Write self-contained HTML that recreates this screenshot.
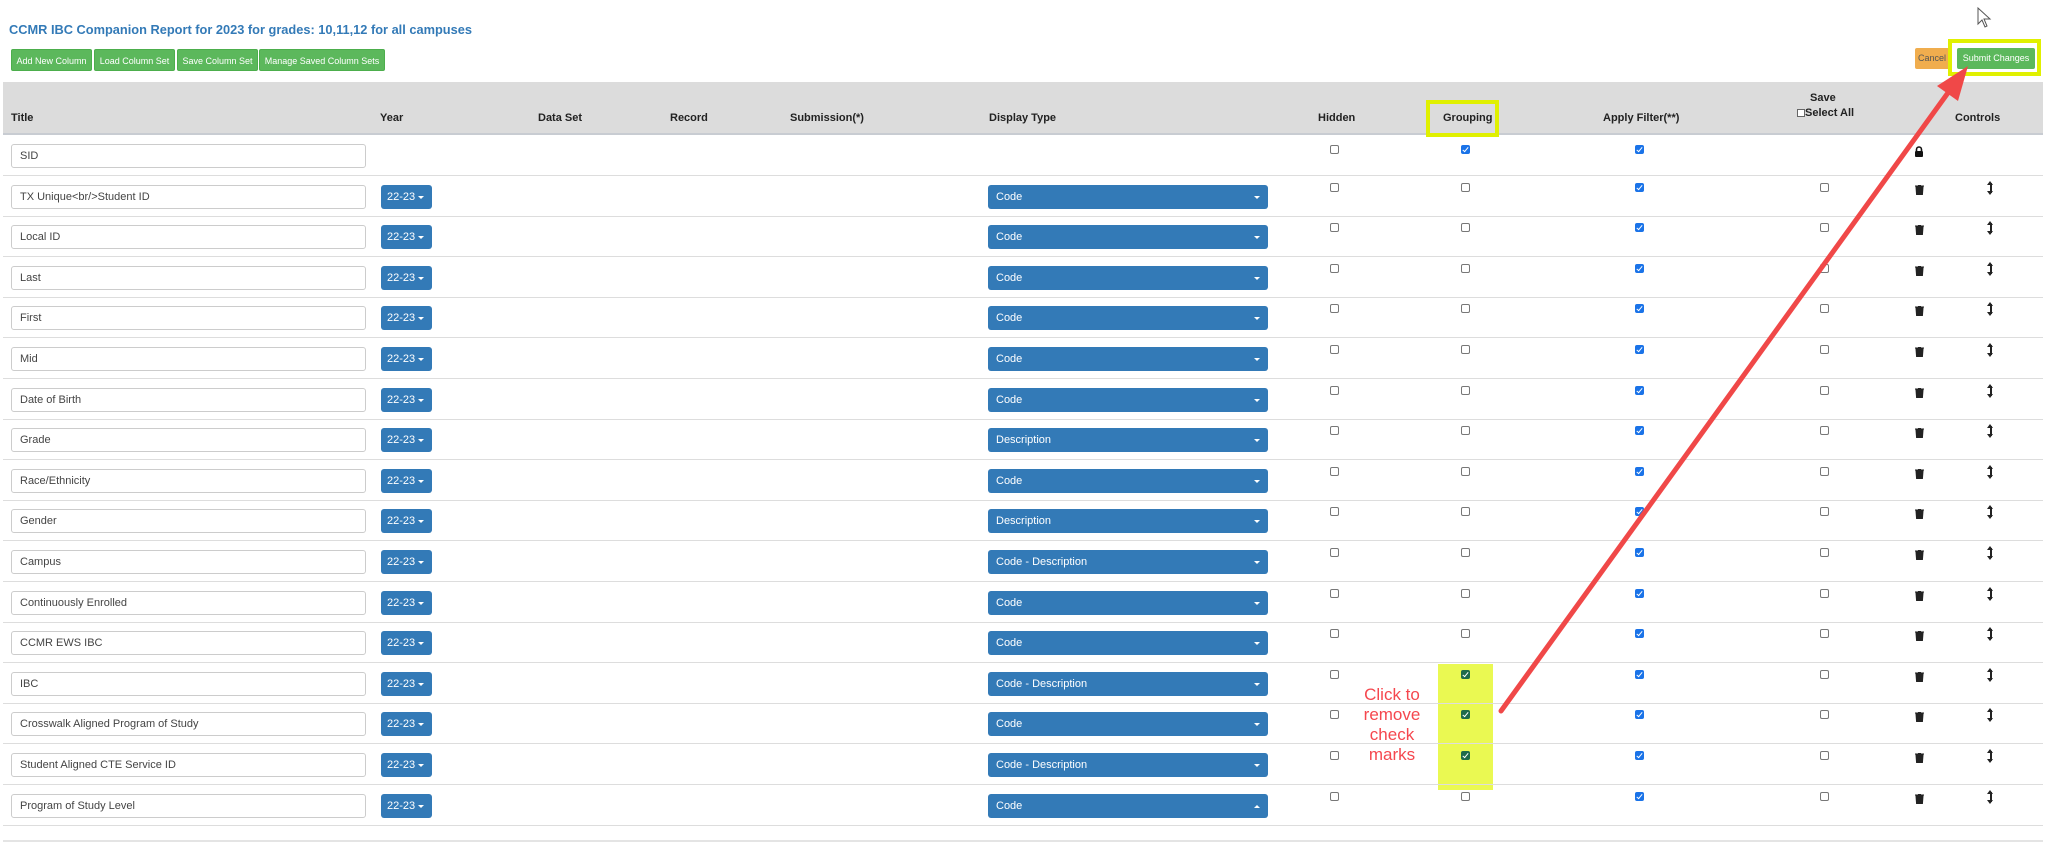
<!DOCTYPE html>
<html><head><meta charset="utf-8"><style>
*{box-sizing:border-box;margin:0;padding:0}
body{width:2048px;height:845px;position:relative;background:#fff;font-family:"Liberation Sans",Arial,sans-serif;overflow:hidden;color:#333}
.a{position:absolute}
.btn{position:absolute;top:49px;height:22px;background:#5cb85c;color:#fff;font-size:9px;line-height:22px;text-align:center;border-radius:2px;border:1px solid #4cae4c;white-space:nowrap;overflow:hidden}
.hd{position:absolute;top:112px;font-size:11px;font-weight:bold;color:#222}
.row{position:absolute;left:3px;width:2040px;height:41px;border-bottom:1px solid #ddd}
.in{position:absolute;left:8px;top:9px;width:355px;height:24px;border:1px solid #ccc;border-radius:3px;font-size:11px;line-height:22px;padding-left:8px;color:#444}
.yr{position:absolute;left:378px;top:9px;width:51px;height:24px;background:#337ab7;border-radius:3px;color:#fff;font-size:11px;line-height:24px;padding-left:6px}
.dt{position:absolute;left:985px;top:9px;width:280px;height:24px;background:#337ab7;border-radius:3px;color:#fff;font-size:11px;line-height:24px;padding-left:8px}
.car{display:inline-block;width:0;height:0;border-left:3px solid transparent;border-right:3px solid transparent;border-top:3px solid #fff;vertical-align:middle;margin-left:3px}
.dt .car{position:absolute;right:8px;top:11px}
.cb{position:absolute;top:7px;width:9px;height:9px;border:1px solid #777;border-radius:2px;background:#fff}
.ck{position:absolute;top:7px;width:9px;height:9px;border-radius:2px;background:#1a73e8}
.ck:after{content:"";position:absolute;left:3px;top:1px;width:2px;height:5px;border:solid #fff;border-width:0 1.5px 1.5px 0;transform:rotate(40deg)}
.g{background:#1f6b4a}
.tr{position:absolute;left:1912px;top:9px;width:9px;height:10px}
.ud{position:absolute;left:1984px;top:5px;width:7px;height:14px;background:no-repeat}
.ud:before{content:"";position:absolute;left:2.5px;top:2px;width:2px;height:10px;background:#222}
.ud:after{content:"";position:absolute;left:0;top:0;width:0;height:0;border-left:3.5px solid transparent;border-right:3.5px solid transparent;border-bottom:4px solid #222;box-shadow:none}
.ud i{position:absolute;left:0;bottom:0;width:0;height:0;border-left:3.5px solid transparent;border-right:3.5px solid transparent;border-top:4px solid #222}
</style></head><body>
<div class="a" style="left:9px;top:22px;font-size:12.8px;font-weight:bold;color:#337ab7">CCMR IBC Companion Report for 2023 for grades: 10,11,12 for all campuses</div>
<div class="btn" style="left:11px;width:81px">Add New Column</div>
<div class="btn" style="left:94px;width:81px">Load Column Set</div>
<div class="btn" style="left:177px;width:81px">Save Column Set</div>
<div class="btn" style="left:259px;width:126px">Manage Saved Column Sets</div>
<div class="a" style="left:1915px;top:48px;width:36px;height:21px;background:#f0ad4e;border-radius:2px;color:#555;font-size:9px;line-height:21px;padding-left:3px">Cancel</div>
<div class="a" style="left:1957px;top:48px;width:78px;height:21px;background:#5cb85c;border-radius:2px;color:#fff;font-size:9px;line-height:21px;text-align:center">Submit Changes</div>
<div class="a" style="left:1948px;top:39px;width:93px;height:37px;border:4px solid #e0f000"></div>
<div class="a" style="left:3px;top:82px;width:2040px;height:53px;background:#dcdcdc;border-bottom:2px solid #c8ccd2"></div>
<div class="hd" style="left:11px">Title</div>
<div class="hd" style="left:380px">Year</div>
<div class="hd" style="left:538px">Data Set</div>
<div class="hd" style="left:670px">Record</div>
<div class="hd" style="left:790px">Submission(*)</div>
<div class="hd" style="left:989px">Display Type</div>
<div class="hd" style="left:1318px">Hidden</div>
<div class="hd" style="left:1443px">Grouping</div>
<div class="hd" style="left:1603px">Apply Filter(**)</div>
<div class="hd" style="left:1810px;top:92px">Save</div>
<div class="hd" style="left:1797px;top:107px"><span style="display:inline-block;width:8px;height:8px;border:1px solid #666;background:#fff;vertical-align:-1px"></span>Select All</div>
<div class="hd" style="left:1955px">Controls</div>
<div class="a" style="left:1426px;top:100px;width:73px;height:37px;border:4px solid #e0f000"></div>
<div class="a" style="left:1438px;top:664px;width:55px;height:126px;background:#eaf952"></div>

<div class="row" style="top:135px"><div class="in">SID</div><div class="cb" style="left:1327px;top:10px"></div><div class="ck" style="left:1458px;top:10px"></div><div class="ck" style="left:1632px;top:10px"></div>
<svg class="a" style="left:1911px;top:11px" width="10" height="11" viewBox="0 0 10 11"><path d="M2.5 5V3.5a2.5 2.5 0 0 1 5 0V5" fill="none" stroke="#111" stroke-width="1.6"/><rect x="1" y="5" width="8" height="6" rx="1" fill="#111"/></svg></div>

<div class="row" style="top:176px"><div class="in">TX Unique&lt;br/&gt;Student ID</div><div class="yr">22-23<span class="car"></span></div><div class="dt">Code<span class="car"></span></div><div class="cb" style="left:1327px"></div><div class="cb" style="left:1458px"></div><div class="ck" style="left:1632px"></div><div class="cb" style="left:1817px"></div><svg class="tr" viewBox="0 0 9 10"><path d="M0 1h9M3 0h3M1 2h7l-.6 8H1.6z" stroke="#222" fill="#222" stroke-width="1"/></svg><div class="ud"><i></i></div></div>
<div class="row" style="top:216px"><div class="in">Local ID</div><div class="yr">22-23<span class="car"></span></div><div class="dt">Code<span class="car"></span></div><div class="cb" style="left:1327px"></div><div class="cb" style="left:1458px"></div><div class="ck" style="left:1632px"></div><div class="cb" style="left:1817px"></div><svg class="tr" viewBox="0 0 9 10"><path d="M0 1h9M3 0h3M1 2h7l-.6 8H1.6z" stroke="#222" fill="#222" stroke-width="1"/></svg><div class="ud"><i></i></div></div>
<div class="row" style="top:257px"><div class="in">Last</div><div class="yr">22-23<span class="car"></span></div><div class="dt">Code<span class="car"></span></div><div class="cb" style="left:1327px"></div><div class="cb" style="left:1458px"></div><div class="ck" style="left:1632px"></div><div class="cb" style="left:1817px"></div><svg class="tr" viewBox="0 0 9 10"><path d="M0 1h9M3 0h3M1 2h7l-.6 8H1.6z" stroke="#222" fill="#222" stroke-width="1"/></svg><div class="ud"><i></i></div></div>
<div class="row" style="top:297px"><div class="in">First</div><div class="yr">22-23<span class="car"></span></div><div class="dt">Code<span class="car"></span></div><div class="cb" style="left:1327px"></div><div class="cb" style="left:1458px"></div><div class="ck" style="left:1632px"></div><div class="cb" style="left:1817px"></div><svg class="tr" viewBox="0 0 9 10"><path d="M0 1h9M3 0h3M1 2h7l-.6 8H1.6z" stroke="#222" fill="#222" stroke-width="1"/></svg><div class="ud"><i></i></div></div>
<div class="row" style="top:338px"><div class="in">Mid</div><div class="yr">22-23<span class="car"></span></div><div class="dt">Code<span class="car"></span></div><div class="cb" style="left:1327px"></div><div class="cb" style="left:1458px"></div><div class="ck" style="left:1632px"></div><div class="cb" style="left:1817px"></div><svg class="tr" viewBox="0 0 9 10"><path d="M0 1h9M3 0h3M1 2h7l-.6 8H1.6z" stroke="#222" fill="#222" stroke-width="1"/></svg><div class="ud"><i></i></div></div>
<div class="row" style="top:379px"><div class="in">Date of Birth</div><div class="yr">22-23<span class="car"></span></div><div class="dt">Code<span class="car"></span></div><div class="cb" style="left:1327px"></div><div class="cb" style="left:1458px"></div><div class="ck" style="left:1632px"></div><div class="cb" style="left:1817px"></div><svg class="tr" viewBox="0 0 9 10"><path d="M0 1h9M3 0h3M1 2h7l-.6 8H1.6z" stroke="#222" fill="#222" stroke-width="1"/></svg><div class="ud"><i></i></div></div>
<div class="row" style="top:419px"><div class="in">Grade</div><div class="yr">22-23<span class="car"></span></div><div class="dt">Description<span class="car"></span></div><div class="cb" style="left:1327px"></div><div class="cb" style="left:1458px"></div><div class="ck" style="left:1632px"></div><div class="cb" style="left:1817px"></div><svg class="tr" viewBox="0 0 9 10"><path d="M0 1h9M3 0h3M1 2h7l-.6 8H1.6z" stroke="#222" fill="#222" stroke-width="1"/></svg><div class="ud"><i></i></div></div>
<div class="row" style="top:460px"><div class="in">Race/Ethnicity</div><div class="yr">22-23<span class="car"></span></div><div class="dt">Code<span class="car"></span></div><div class="cb" style="left:1327px"></div><div class="cb" style="left:1458px"></div><div class="ck" style="left:1632px"></div><div class="cb" style="left:1817px"></div><svg class="tr" viewBox="0 0 9 10"><path d="M0 1h9M3 0h3M1 2h7l-.6 8H1.6z" stroke="#222" fill="#222" stroke-width="1"/></svg><div class="ud"><i></i></div></div>
<div class="row" style="top:500px"><div class="in">Gender</div><div class="yr">22-23<span class="car"></span></div><div class="dt">Description<span class="car"></span></div><div class="cb" style="left:1327px"></div><div class="cb" style="left:1458px"></div><div class="ck" style="left:1632px"></div><div class="cb" style="left:1817px"></div><svg class="tr" viewBox="0 0 9 10"><path d="M0 1h9M3 0h3M1 2h7l-.6 8H1.6z" stroke="#222" fill="#222" stroke-width="1"/></svg><div class="ud"><i></i></div></div>
<div class="row" style="top:541px"><div class="in">Campus</div><div class="yr">22-23<span class="car"></span></div><div class="dt">Code - Description<span class="car"></span></div><div class="cb" style="left:1327px"></div><div class="cb" style="left:1458px"></div><div class="ck" style="left:1632px"></div><div class="cb" style="left:1817px"></div><svg class="tr" viewBox="0 0 9 10"><path d="M0 1h9M3 0h3M1 2h7l-.6 8H1.6z" stroke="#222" fill="#222" stroke-width="1"/></svg><div class="ud"><i></i></div></div>
<div class="row" style="top:582px"><div class="in">Continuously Enrolled</div><div class="yr">22-23<span class="car"></span></div><div class="dt">Code<span class="car"></span></div><div class="cb" style="left:1327px"></div><div class="cb" style="left:1458px"></div><div class="ck" style="left:1632px"></div><div class="cb" style="left:1817px"></div><svg class="tr" viewBox="0 0 9 10"><path d="M0 1h9M3 0h3M1 2h7l-.6 8H1.6z" stroke="#222" fill="#222" stroke-width="1"/></svg><div class="ud"><i></i></div></div>
<div class="row" style="top:622px"><div class="in">CCMR EWS IBC</div><div class="yr">22-23<span class="car"></span></div><div class="dt">Code<span class="car"></span></div><div class="cb" style="left:1327px"></div><div class="cb" style="left:1458px"></div><div class="ck" style="left:1632px"></div><div class="cb" style="left:1817px"></div><svg class="tr" viewBox="0 0 9 10"><path d="M0 1h9M3 0h3M1 2h7l-.6 8H1.6z" stroke="#222" fill="#222" stroke-width="1"/></svg><div class="ud"><i></i></div></div>
<div class="row" style="top:663px"><div class="in">IBC</div><div class="yr">22-23<span class="car"></span></div><div class="dt">Code - Description<span class="car"></span></div><div class="cb" style="left:1327px"></div><div class="ck g" style="left:1458px"></div><div class="ck" style="left:1632px"></div><div class="cb" style="left:1817px"></div><svg class="tr" viewBox="0 0 9 10"><path d="M0 1h9M3 0h3M1 2h7l-.6 8H1.6z" stroke="#222" fill="#222" stroke-width="1"/></svg><div class="ud"><i></i></div></div>
<div class="row" style="top:703px"><div class="in">Crosswalk Aligned Program of Study</div><div class="yr">22-23<span class="car"></span></div><div class="dt">Code<span class="car"></span></div><div class="cb" style="left:1327px"></div><div class="ck g" style="left:1458px"></div><div class="ck" style="left:1632px"></div><div class="cb" style="left:1817px"></div><svg class="tr" viewBox="0 0 9 10"><path d="M0 1h9M3 0h3M1 2h7l-.6 8H1.6z" stroke="#222" fill="#222" stroke-width="1"/></svg><div class="ud"><i></i></div></div>
<div class="row" style="top:744px"><div class="in">Student Aligned CTE Service ID</div><div class="yr">22-23<span class="car"></span></div><div class="dt">Code - Description<span class="car"></span></div><div class="cb" style="left:1327px"></div><div class="ck g" style="left:1458px"></div><div class="ck" style="left:1632px"></div><div class="cb" style="left:1817px"></div><svg class="tr" viewBox="0 0 9 10"><path d="M0 1h9M3 0h3M1 2h7l-.6 8H1.6z" stroke="#222" fill="#222" stroke-width="1"/></svg><div class="ud"><i></i></div></div>
<div class="row" style="top:785px"><div class="in">Program of Study Level</div><div class="yr">22-23<span class="car"></span></div><div class="dt">Code<span class="car" style="border-top:0;border-bottom:3px solid #fff"></span></div><div class="cb" style="left:1327px"></div><div class="cb" style="left:1458px"></div><div class="ck" style="left:1632px"></div><div class="cb" style="left:1817px"></div><svg class="tr" viewBox="0 0 9 10"><path d="M0 1h9M3 0h3M1 2h7l-.6 8H1.6z" stroke="#222" fill="#222" stroke-width="1"/></svg><div class="ud"><i></i></div></div>
<div class="a" style="left:3px;top:840px;width:2040px;height:2px;background:#e4e4e4"></div>

<div class="a" style="left:1352px;top:685px;width:80px;text-align:center;color:#f5474e;font-size:17px;line-height:20px">Click to remove check marks</div>

<svg class="a" style="left:0;top:0" width="2048" height="845">
<line x1="1501" y1="711" x2="1950" y2="90" stroke="#f04848" stroke-width="5" stroke-linecap="round"/>
<polygon points="1968,66 1937,86 1958,101" fill="#f04848"/>
<path d="M1978 8 L1978 24 L1982 20 L1985 27 L1987 26 L1984 19 L1990 19 Z" fill="#fff" stroke="#555" stroke-width="1"/>
</svg>
</body></html>
